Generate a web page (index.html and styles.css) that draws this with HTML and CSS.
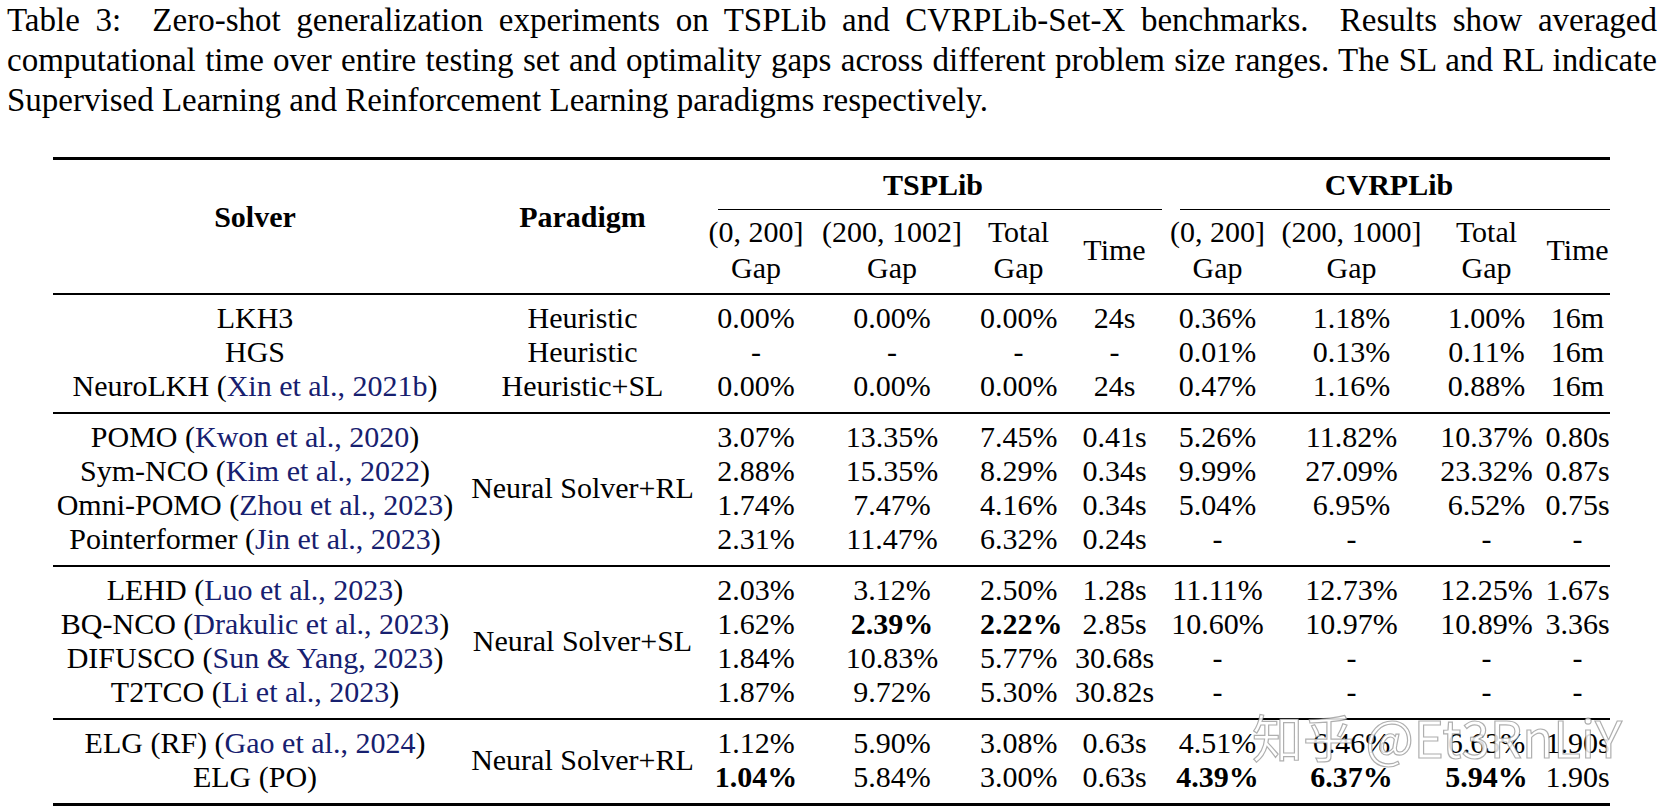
FILE: index.html
```html
<!DOCTYPE html>
<html lang="en">
<head>
<meta charset="utf-8">
<title>Table 3</title>
<link rel="stylesheet" href="styles.css">
</head>
<body>
<div class="page">
  <p class="caption">
    <span class="cap-line full">Table 3:&nbsp; Zero-shot generalization experiments on TSPLib and CVRPLib-Set-X benchmarks.&nbsp; Results show averaged</span>
    <span class="cap-line full">computational time over entire testing set and optimality gaps across different problem size ranges. The SL and RL indicate</span>
    <span class="cap-line">Supervised Learning and Reinforcement Learning paradigms respectively.</span>
  </p>

  <table class="results">
    <colgroup>
      <col class="c-solver">
      <col class="c-paradigm">
      <col class="c-gap1">
      <col class="c-gap2">
      <col class="c-total">
      <col class="c-time">
      <col class="c-gap3">
      <col class="c-gap4">
      <col class="c-total2">
      <col class="c-time2">
    </colgroup>
    <thead>
      <tr class="head-top">
        <th rowspan="2" class="head-main">Solver</th>
        <th rowspan="2" class="head-main">Paradigm</th>
        <th colspan="4" class="head-group"><div class="group-label tsp">TSPLib</div></th>
        <th colspan="4" class="head-group"><div class="group-label cvrp">CVRPLib</div></th>
      </tr>
      <tr class="head-sub">
        <th>(0, 200]<br>Gap</th>
        <th>(200, 1002]<br>Gap</th>
        <th class="p-total">Total<br>Gap</th>
        <th class="p-time">Time</th>
        <th>(0, 200]<br>Gap</th>
        <th>(200, 1000]<br>Gap</th>
        <th>Total<br>Gap</th>
        <th class="p-time2">Time</th>
      </tr>
    </thead>
    <tbody>
      <tr>
        <td>LKH3</td><td>Heuristic</td>
        <td>0.00%</td><td>0.00%</td><td class="p-total">0.00%</td><td class="p-time">24s</td>
        <td>0.36%</td><td>1.18%</td><td>1.00%</td><td class="p-time2">16m</td>
      </tr>
      <tr>
        <td>HGS</td><td>Heuristic</td>
        <td>-</td><td>-</td><td class="p-total">-</td><td class="p-time">-</td>
        <td>0.01%</td><td>0.13%</td><td>0.11%</td><td class="p-time2">16m</td>
      </tr>
      <tr>
        <td>NeuroLKH (<span class="cite">Xin et al., 2021b</span>)</td><td>Heuristic+SL</td>
        <td>0.00%</td><td>0.00%</td><td class="p-total">0.00%</td><td class="p-time">24s</td>
        <td>0.47%</td><td>1.16%</td><td>0.88%</td><td class="p-time2">16m</td>
      </tr>
    </tbody>
    <tbody>
      <tr>
        <td>POMO (<span class="cite">Kwon et al., 2020</span>)</td><td rowspan="4" class="span-cell">Neural Solver+RL</td>
        <td>3.07%</td><td>13.35%</td><td class="p-total">7.45%</td><td class="p-time">0.41s</td>
        <td>5.26%</td><td>11.82%</td><td>10.37%</td><td class="p-time2">0.80s</td>
      </tr>
      <tr>
        <td>Sym-NCO (<span class="cite">Kim et al., 2022</span>)</td>
        <td>2.88%</td><td>15.35%</td><td class="p-total">8.29%</td><td class="p-time">0.34s</td>
        <td>9.99%</td><td>27.09%</td><td>23.32%</td><td class="p-time2">0.87s</td>
      </tr>
      <tr>
        <td>Omni-POMO (<span class="cite">Zhou et al., 2023</span>)</td>
        <td>1.74%</td><td>7.47%</td><td class="p-total">4.16%</td><td class="p-time">0.34s</td>
        <td>5.04%</td><td>6.95%</td><td>6.52%</td><td class="p-time2">0.75s</td>
      </tr>
      <tr>
        <td>Pointerformer (<span class="cite">Jin et al., 2023</span>)</td>
        <td>2.31%</td><td>11.47%</td><td class="p-total">6.32%</td><td class="p-time">0.24s</td>
        <td>-</td><td>-</td><td>-</td><td class="p-time2">-</td>
      </tr>
    </tbody>
    <tbody>
      <tr>
        <td>LEHD (<span class="cite">Luo et al., 2023</span>)</td><td rowspan="4" class="span-cell">Neural Solver+SL</td>
        <td>2.03%</td><td>3.12%</td><td class="p-total">2.50%</td><td class="p-time">1.28s</td>
        <td>11.11%</td><td>12.73%</td><td>12.25%</td><td class="p-time2">1.67s</td>
      </tr>
      <tr>
        <td>BQ-NCO (<span class="cite">Drakulic et al., 2023</span>)</td>
        <td>1.62%</td><td class="best">2.39%</td><td class="p-total best">2.22%</td><td class="p-time">2.85s</td>
        <td>10.60%</td><td>10.97%</td><td>10.89%</td><td class="p-time2">3.36s</td>
      </tr>
      <tr>
        <td>DIFUSCO (<span class="cite">Sun &amp; Yang, 2023</span>)</td>
        <td>1.84%</td><td>10.83%</td><td class="p-total">5.77%</td><td class="p-time">30.68s</td>
        <td>-</td><td>-</td><td>-</td><td class="p-time2">-</td>
      </tr>
      <tr>
        <td>T2TCO (<span class="cite">Li et al., 2023</span>)</td>
        <td>1.87%</td><td>9.72%</td><td class="p-total">5.30%</td><td class="p-time">30.82s</td>
        <td>-</td><td>-</td><td>-</td><td class="p-time2">-</td>
      </tr>
    </tbody>
    <tbody class="last-group">
      <tr>
        <td>ELG (RF) (<span class="cite">Gao et al., 2024</span>)</td><td rowspan="2" class="span-cell">Neural Solver+RL</td>
        <td>1.12%</td><td>5.90%</td><td class="p-total">3.08%</td><td class="p-time">0.63s</td>
        <td>4.51%</td><td>6.46%</td><td>6.63%</td><td class="p-time2">1.90s</td>
      </tr>
      <tr>
        <td>ELG (PO)</td>
        <td class="best">1.04%</td><td>5.84%</td><td class="p-total">3.00%</td><td class="p-time">0.63s</td>
        <td class="best">4.39%</td><td class="best">6.37%</td><td class="best">5.94%</td><td class="p-time2">1.90s</td>
      </tr>
    </tbody>
  </table>

  <div class="watermark">知乎 @Et3RnLiY</div>
</div>
</body>
</html>
```

FILE: styles.css
```css
html, body {
  margin: 0;
  padding: 0;
  background: #ffffff;
}

body {
  font-family: "Liberation Serif", "Times New Roman", serif;
  color: #000;
}

.page {
  position: relative;
  width: 1661px;
  height: 808px;
  overflow: hidden;
}

/* Caption */
.caption {
  margin: 0;
  padding-left: 7px;
  width: 1650px;
  font-size: 33px;
  line-height: 40px;
}

.cap-line {
  display: block;
  white-space: nowrap;
}

.cap-line.full {
  text-align: justify;
  text-align-last: justify;
  white-space: normal;
}

/* Table */
.results {
  margin: 37px 0 0 53px;
  width: 1557px;
  table-layout: fixed;
  border-collapse: separate;
  border-spacing: 0;
  font-size: 30px;
  line-height: 34px;
}

.c-solver { width: 404px; }
.c-paradigm { width: 251px; }
.c-gap1 { width: 96px; }
.c-gap2 { width: 176px; }
.c-total { width: 82px; }
.c-time { width: 108px; }
.c-gap3 { width: 95px; }
.c-gap4 { width: 173px; }
.c-total2 { width: 97px; }
.c-time2 { width: 75px; }

.results th,
.results td {
  padding: 0;
  text-align: center;
  vertical-align: middle;
  white-space: nowrap;
  font-weight: normal;
}

/* header */
.head-top th {
  border-top: 3px solid #000;
}

.head-main {
  font-weight: bold !important;
  padding-bottom: 20px !important;
}

.head-group {
  padding-top: 8px !important;
  vertical-align: top !important;
}

.group-label {
  font-weight: bold;
  padding-bottom: 7px;
  border-bottom: 1.5px solid #000;
}

.group-label.tsp {
  margin: 0 8px 0 10px;
  padding-right: 14px;
}

.group-label.cvrp {
  margin: 0 0 0 10px;
  padding-right: 12px;
}

.head-sub th {
  line-height: 36px;
  padding-top: 4px;
  padding-bottom: 7px;
}

/* body groups */
.results tbody tr:first-child td {
  border-top: 2px solid #000;
  padding-top: 6px;
}

.results tbody tr:last-child td,
.results .span-cell {
  padding-bottom: 9px;
}

.results .last-group tr:last-child td,
.results .last-group .span-cell {
  border-bottom: 3px solid #000;
}

/* column fine-tuning */
.results .p-total { padding-right: 5px; }
.results .p-time { padding-right: 3px; }
.results .p-time2 { padding-left: 10px; }

.cite {
  color: #17206f;
}

.best {
  font-weight: bold !important;
}

/* Watermark overlay */
.watermark {
  position: absolute;
  left: 1252px;
  top: 704px;
  font-family: "Noto Sans CJK SC", "Noto Sans", sans-serif;
  font-size: 51px;
  line-height: 64px;
  color: rgba(255, 255, 255, 0.85);
  -webkit-text-stroke: 1.2px rgba(110, 110, 110, 0.55);
  white-space: nowrap;
  pointer-events: none;
}
```
